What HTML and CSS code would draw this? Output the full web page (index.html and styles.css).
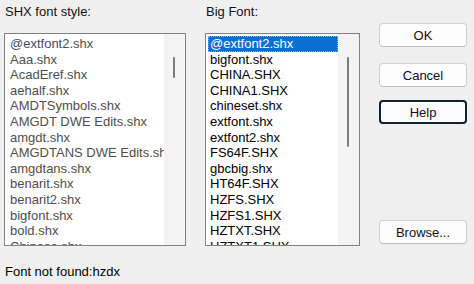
FILE: index.html
```html
<!DOCTYPE html>
<html>
<head>
<meta charset="utf-8">
<link rel="stylesheet" href="styles.css">
</head>
<body>
<div class="dialog">
  <div class="main">
    <div class="col col-shx">
      <div class="label">SHX font style:</div>
      <div class="list list-shx">
        <div class="items">
          <div class="item">@extfont2.shx</div>
          <div class="item">Aaa.shx</div>
          <div class="item">AcadEref.shx</div>
          <div class="item">aehalf.shx</div>
          <div class="item">AMDTSymbols.shx</div>
          <div class="item">AMGDT DWE Edits.shx</div>
          <div class="item">amgdt.shx</div>
          <div class="item">AMGDTANS DWE Edits.shx</div>
          <div class="item">amgdtans.shx</div>
          <div class="item">benarit.shx</div>
          <div class="item">benarit2.shx</div>
          <div class="item">bigfont.shx</div>
          <div class="item">bold.shx</div>
          <div class="item">Chinese.shx</div>
        </div>
        <div class="scrollbar"><div class="thumb thumb-shx"></div></div>
      </div>
    </div>
    <div class="col col-big">
      <div class="label">Big Font:</div>
      <div class="list list-big">
        <div class="items">
          <div class="item selected">@extfont2.shx</div>
          <div class="item">bigfont.shx</div>
          <div class="item">CHINA.SHX</div>
          <div class="item">CHINA1.SHX</div>
          <div class="item">chineset.shx</div>
          <div class="item">extfont.shx</div>
          <div class="item">extfont2.shx</div>
          <div class="item">FS64F.SHX</div>
          <div class="item">gbcbig.shx</div>
          <div class="item">HT64F.SHX</div>
          <div class="item">HZFS.SHX</div>
          <div class="item">HZFS1.SHX</div>
          <div class="item">HZTXT.SHX</div>
          <div class="item">HZTXT1.SHX</div>
        </div>
        <div class="scrollbar"><div class="thumb thumb-big"></div></div>
      </div>
    </div>
    <div class="col col-buttons">
      <button class="btn btn-ok">OK</button>
      <button class="btn btn-cancel">Cancel</button>
      <button class="btn btn-help">Help</button>
      <button class="btn btn-browse">Browse...</button>
    </div>
  </div>
  <div class="status">Font not found:hzdx</div>
</div>
</body>
</html>
```

FILE: styles.css
```css
html, body {
  margin: 0;
  padding: 0;
  background: #f0f0f0;
  overflow: hidden;
}
body {
  width: 474px;
  height: 284px;
  font-family: "Liberation Sans", Arial, sans-serif;
  font-size: 13px;
  color: #000;
}
.dialog {
  display: flex;
  flex-direction: column;
  height: 284px;
}
.main {
  display: flex;
  padding-left: 4px;
}
.col {
  display: flex;
  flex-direction: column;
}
.col-shx {
  width: 182px;
}
.col-big {
  width: 155px;
  margin-left: 19px;
}
.label {
  height: 15px;
  line-height: 15px;
  margin-top: 4px;
  margin-left: 1px;
  margin-bottom: 14px;
  color: #111;
}
.list {
  display: flex;
  height: 211px;
  border: 1px solid #828282;
  background: #fff;
  overflow: hidden;
}
.items {
  flex: 1;
  padding-top: 2px;
  padding-left: 1px;
  overflow: hidden;
  min-width: 0;
}
.item {
  height: 15.6px;
  line-height: 15.6px;
  white-space: nowrap;
  overflow: hidden;
}
.list-shx .item {
  padding-left: 4px;
  color: #4e4e4e;
}
.list-big .item {
  padding-left: 3px;
  color: #000;
}
.list-big .item.selected {
  margin-left: 1px;
  padding-left: 2px;
  background: #0a6fd2;
  color: #fff;
  outline: 1px dotted #7fb4ea;
  outline-offset: -1px;
}
.scrollbar {
  width: 21px;
  flex: none;
  background: #f3f3f3;
  position: relative;
}
.thumb {
  position: absolute;
  left: 9px;
  width: 2px;
  border-radius: 1px;
  background: #7d7d7d;
}
.thumb-shx {
  top: 23px;
  height: 21px;
}
.thumb-big {
  top: 23px;
  height: 90px;
}
.col-buttons {
  margin-left: 19px;
  padding-top: 23px;
  width: 88px;
}
.btn {
  display: block;
  width: 88px;
  height: 24px;
  padding: 0;
  font-family: "Liberation Sans", Arial, sans-serif;
  font-size: 13px;
  color: #111;
  background: #fdfdfd;
  border: 1px solid #d0d0d0;
  border-bottom-color: #bdbdbd;
  border-radius: 4px;
}
.btn-cancel {
  margin-top: 16px;
}
.btn-help {
  margin-top: 13px;
  border: 2px solid #10203a;
  background: #f8fcff;
  box-shadow: inset 0 0 0 1px #ffffff;
}
.btn-browse {
  margin-top: 96px;
}
.status {
  margin-top: 18px;
  margin-left: 5px;
  height: 15px;
  line-height: 15px;
  color: #000;
}
```
